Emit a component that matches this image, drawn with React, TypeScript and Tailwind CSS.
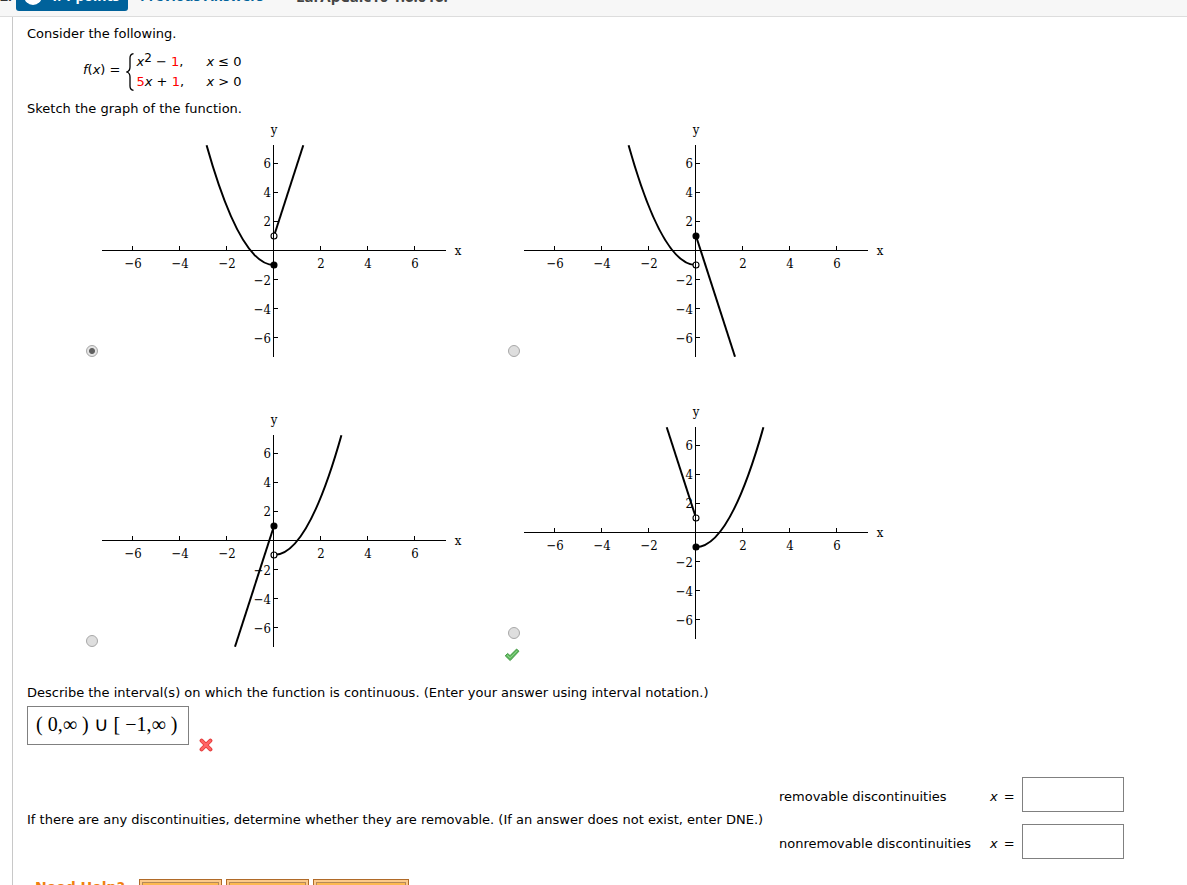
import type { ReactNode } from 'react'

// Pixels per unit on each axis, and where the origin sits in the plot
const UX = 23.5
const UY = 14.55
const OX = 172
const OY = 130.5
const TOP = 7.23

type Point = { y: number; open: boolean }

type Graph = {
  id: string
  label: string
  line: [number, number, number, number]
  side: 1 | -1
  points: Point[]
  correct?: boolean
}

const graphs: Graph[] = [
  {
    id: 'a',
    label: 'Parabola on the left, rising line on the right',
    line: [0, 1, 1.246, TOP],
    side: -1,
    points: [{ y: 1, open: true }, { y: -1, open: false }],
  },
  {
    id: 'b',
    label: 'Parabola on the left, falling line on the right',
    line: [0, 1, 1.66, -7.3],
    side: -1,
    points: [{ y: 1, open: false }, { y: -1, open: true }],
  },
  {
    id: 'c',
    label: 'Rising line on the left, parabola on the right',
    line: [-1.66, -7.3, 0, 1],
    side: 1,
    points: [{ y: 1, open: false }, { y: -1, open: true }],
  },
  {
    id: 'd',
    label: 'Falling line on the left, parabola on the right',
    line: [-1.246, TOP, 0, 1],
    side: 1,
    points: [{ y: 1, open: true }, { y: -1, open: false }],
    correct: true,
  },
]

const ticks = [-6, -4, -2, 2, 4, 6]

const helpButtons = [
  { text: 'Read It', width: 'w-[83px]' },
  { text: 'Watch It', width: 'w-[83px]' },
  { text: 'Talk to a Tutor', width: 'w-24' },
]

const px = (x: number) => OX + x * UX
const py = (y: number) => OY - y * UY

function parabola(side: 1 | -1) {
  // x^2 - 1 from the vertex to the top of the plot, as one quadratic curve
  const end = Math.sqrt(TOP + 1) * side
  return `M${px(0)} ${py(-1)}Q${px(end / 2)} ${py(-1)} ${px(end)} ${py(TOP)}`
}

function tickLabel(n: number) {
  return n < 0 ? `−${-n}` : `${n}`
}

function Plot({ graph }: { graph: Graph }) {
  const [x1, y1, x2, y2] = graph.line
  return (
    <svg
      width="362"
      height="237"
      viewBox="0 0 362 237"
      role="img"
      aria-label={graph.label}
      className="shrink-0 font-['DejaVu_Serif_Condensed','DejaVu_Serif',serif] text-[13px]"
    >
      {ticks.map((t) => (
        <g key={t}>
          <text x={px(t)} y="148" textAnchor="middle">
            {tickLabel(t)}
          </text>
          <text x="169" y={Math.round(py(t)) + 5} textAnchor="end">
            {tickLabel(t)}
          </text>
        </g>
      ))}
      <text x="172" y="14" textAnchor="middle">y</text>
      <text x="356" y="135" textAnchor="middle">x</text>

      <g fill="none" stroke="#000" strokeWidth="2">
        <path d={parabola(graph.side)} />
        <path d={`M${px(x1)} ${py(y1)}L${px(x2)} ${py(y2)}`} />
      </g>
      {graph.points.map((p) => (
        <circle
          key={p.y}
          cx="172"
          cy={py(p.y)}
          r="3"
          fill={p.open ? '#fff' : '#000'}
          stroke="#000"
          strokeWidth="1.1"
        />
      ))}

      {/* Axes go last so they show through the open points */}
      <g stroke="#000" strokeWidth="1" shapeRendering="crispEdges">
        <path d="M0 130.5H344M171.5 25V237" />
        {ticks.map((t) => (
          <path
            key={t}
            d={`M${Math.floor(171.5 + t * UX) + 0.5} 126v4M172 ${Math.floor(OY - t * UY) + 0.5}h4`}
          />
        ))}
      </g>
    </svg>
  )
}

function Check() {
  return (
    <svg width="16" height="16" viewBox="0 0 16 16" aria-label="Correct">
      <path
        d="M1.2 8.8 3.6 6.4 6 8.6 12.6 2 15 4.2 6.2 13.6Z"
        fill="#5cb85c"
        stroke="#3f9440"
        strokeWidth="0.9"
        strokeLinejoin="round"
      />
      <path d="M3.2 8.2 6.1 10.8 13 3.8" fill="none" stroke="#93d68f" strokeWidth="1" />
    </svg>
  )
}

function Cross() {
  return (
    <svg width="14" height="14" viewBox="0 0 14 14" aria-label="Incorrect">
      <path d="M2.6 2.6 11.4 11.4M11.4 2.6 2.6 11.4" stroke="#e33b3b" strokeWidth="4" strokeLinecap="round" />
      <path d="M2.8 2.8 11.2 11.2M11.2 2.8 2.8 11.2" stroke="#ff6464" strokeWidth="2.4" strokeLinecap="round" />
    </svg>
  )
}

function Red({ children }: { children: ReactNode }) {
  return <span className="text-[#ff0000]">{children}</span>
}

function AnswerRow({ id, label }: { id: string; label: string }) {
  return (
    <div className="flex items-end">
      <label htmlFor={id} className="flex pb-[7px]">
        <span className="w-[211px]">{label}</span>
        <span className="flex w-8 gap-1.5"><i>x</i> <span>=</span></span>
      </label>
      <input id={id} type="text" className="h-[35px] w-[102px] border border-[#808080] bg-white px-2" />
    </div>
  )
}

export default function App() {
  return (
    <div className="flex h-screen flex-col overflow-hidden bg-white font-['DejaVu_Sans',Verdana,sans-serif] text-[13px] leading-4 text-black">

      {/* Question bar, scrolled almost out of view */}
      <header className="flex h-[17px] shrink-0 items-end overflow-hidden border-b border-[#dddddd] bg-[#f7f7f7] font-['Open_Sans',sans-serif] text-sm leading-4 font-bold text-[#444444]">
        <span className="w-4 pb-3 text-[#333333]">2.</span>
        <span className="mb-[5px] flex w-28 items-end rounded-b-[3px] bg-[#00629b] pl-2 text-white">
          <span className="mr-2 mb-1.5 size-[18px] rounded-full bg-white" />
          <span className="pb-[7px]">1/1 points</span>
        </span>
        <a href="#previous" className="ml-3 w-[144px] pb-3 whitespace-nowrap text-[#00629b]">Previous Answers</a>
        <span className="ml-3 pb-3 text-[15px]">LarApCalc10 1.6.016.</span>
      </header>

      <main className="ml-3 flex-1 border-l border-[#c8c8c8] pt-[9px] pl-[14px]">
        <p>Consider the following.</p>

        {/* Piecewise definition */}
        <div className="mt-[9px] flex h-[41px] items-center pl-14">
          <span className="pb-1"><i>f</i>(<i>x</i>) =</span>
          <svg width="8" height="38" viewBox="0 0 8 38" className="mr-0.5 ml-1.5" aria-hidden="true">
            <path
              d="M7.5 .7Q4 1.2 4 5V14Q4 18 .8 19Q4 20 4 24V33Q4 36.8 7.5 37.3"
              fill="none"
              stroke="#000"
              strokeWidth="1.3"
            />
          </svg>
          <div className="grid grid-cols-[70px_auto] leading-5">
            <span><i>x</i><sup className="top-[-4px] text-[12px]">2</sup> − <Red>1</Red>,</span>
            <span><i>x</i> ≤ 0</span>
            <span><Red>5</Red><i>x</i> + <Red>1</Red>,</span>
            <span><i>x</i> &gt; 0</span>
          </div>
        </div>

        <p className="mt-[9px]">Sketch the graph of the function.</p>

        {/* Graph choices */}
        <div className="mt-[3px] grid grid-cols-[422px_auto] items-center justify-start gap-y-[37px] pl-[59px]">
          {graphs.map((g) => (
            <div key={g.id}>
              <label className="flex items-end pb-2">
                <input
                  type="radio"
                  name="graph"
                  defaultChecked={g.id === 'a'}
                  className="mr-1 size-3 shrink-0 appearance-none rounded-full border border-[#a8a8a8] bg-[#dedede] checked:bg-[radial-gradient(circle,#606060_0_2.5px,#e4e4e4_3.5px)]"
                />
                <Plot graph={g} />
              </label>
              {g.correct && (
                <div className="-ml-1 h-4">
                  <Check />
                </div>
              )}
            </div>
          ))}
        </div>

        <label htmlFor="interval" className="mt-[22px] block">
          Describe the interval(s) on which the function is continuous. (Enter your answer using interval notation.)
        </label>
        <div className="mt-[5px] flex items-end gap-2.5">
          <input
            id="interval"
            type="text"
            defaultValue="( 0,∞ ) ∪ [ −1,∞ )"
            className="h-[39px] w-[162px] border border-[#808080] bg-white px-2 pb-1 font-['Liberation_Serif',serif] text-xl"
          />
          <div className="-mb-[7px]">
            <Cross />
          </div>
        </div>

        <div className="mt-8 flex items-center gap-1">
          <p className="w-[748px] pt-[3px]">
            If there are any discontinuities, determine whether they are removable. (If an answer does not exist, enter DNE.)
          </p>
          <div className="flex shrink-0 flex-col gap-3">
            <AnswerRow id="removable" label="removable discontinuities" />
            <AnswerRow id="nonremovable" label="nonremovable discontinuities" />
          </div>
        </div>

        {/* Help strip, cut off by the bottom of the window */}
        <div className="mt-5 flex items-start gap-1 pl-2">
          <h2 className="w-[100px] text-sm leading-4 font-bold text-[#f08010]">Need Help?</h2>
          {helpButtons.map((b) => (
            <button
              key={b.text}
              type="button"
              className={`${b.width} h-6 border border-[#b06a28] bg-[#fbc98a] p-0.5 text-[10px] leading-4`}
            >
              <span className="block border border-[#b58a58] bg-[#fdb950]">{b.text}</span>
            </button>
          ))}
        </div>
      </main>
    </div>
  )
}
